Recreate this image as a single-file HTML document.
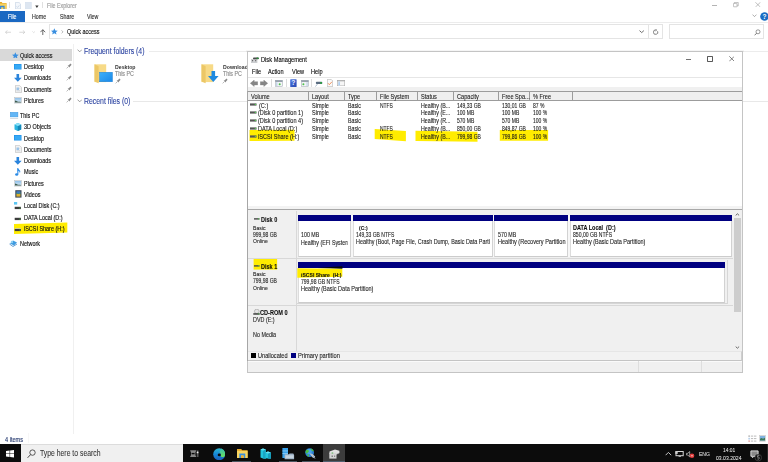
<!DOCTYPE html><html><head><meta charset="utf-8"><style>
*{margin:0;padding:0;box-sizing:border-box}
html,body{width:768px;height:462px;overflow:hidden}
body{position:relative;background:#fff;font-family:"Liberation Sans",sans-serif;color:#000}
.a{position:absolute}
.t{position:absolute;white-space:nowrap;line-height:10px;height:10px;transform-origin:0 0}
</style></head><body><svg class="a" style="left:-2.5px;top:2px;" width="9" height="7" viewBox="0 0 9 7"><path d="M0 0h3.6l0.9 1H8.5v6H0z" fill="#e2a62a"/><rect x="0" y="1.5" width="8.5" height="5.5" fill="#f8d25e"/><path d="M2 7V3.8h4.6V7H5.4V5.3H3.2V7z" fill="#3a8ad8"/></svg>
<div class="a" style="left:9.3px;top:2.3px;width:0.90px;height:5.40px;background:#e0e0e0"></div>
<svg class="a" style="left:15px;top:2px;" width="6" height="7.4" viewBox="0 0 6 7.4"><path d="M0.4 0.4h3.6l1.6 1.6v5H0.4z" fill="#f4f7fb" stroke="#c5d3e4" stroke-width="0.7"/><path d="M1.5 4.4l1 1 1.8-2" fill="none" stroke="#b0c2d8" stroke-width="0.6"/></svg>
<svg class="a" style="left:25.4px;top:2px;" width="6.6" height="7.4" viewBox="0 0 6.6 7.4"><rect x="0.3" y="0.3" width="6" height="6.8" fill="#dde6f1" stroke="#d0dceb" stroke-width="0.5"/></svg>
<svg class="a" style="left:35.4px;top:4.6px;" width="4" height="3.2" viewBox="0 0 4 3.2"><path d="M0.2 0.4h3.4L1.9 2.9z" fill="#333"/></svg>
<div class="a" style="left:42.2px;top:2.3px;width:0.80px;height:5.40px;background:#e0e0e0"></div>
<div class="t" style="left:46.6px;top:1.40px;font-size:6.360px;transform:scaleX(0.8333);color:#9a9a9a;-webkit-text-stroke:0.14px #9a9a9a;">File Explorer</div>
<div class="a" style="left:712.4px;top:4.65px;width:4.90px;height:0.45px;background:#b4b4b4"></div>
<svg class="a" style="left:732.9px;top:2.4px;" width="6" height="5.2" viewBox="0 0 6 5.2"><rect x="0.4" y="1.4" width="3.6" height="3.4" rx="0.4" fill="none" stroke="#999" stroke-width="0.6"/><path d="M1.4 1.4V0.4h3.8v3.5H4" fill="none" stroke="#999" stroke-width="0.6"/></svg>
<svg class="a" style="left:754.7px;top:2.1px;" width="6" height="5.4" viewBox="0 0 6 5.4"><path d="M0.3 0.2l5.2 5M5.5 0.2l-5.2 5" stroke="#999" stroke-width="0.6"/></svg>
<div class="a" style="left:0px;top:10.9px;width:25.00px;height:10.70px;background:#1a68c2"></div>
<div class="t" style="left:8px;top:12.00px;font-size:6.360px;transform:scaleX(0.8333);color:#fff;-webkit-text-stroke:0.14px #fff;">File</div>
<div class="t" style="left:31.9px;top:12.00px;font-size:6.360px;transform:scaleX(0.8333);color:#333;-webkit-text-stroke:0.14px #333;">Home</div>
<div class="t" style="left:59.6px;top:12.00px;font-size:6.360px;transform:scaleX(0.8333);color:#333;-webkit-text-stroke:0.14px #333;">Share</div>
<div class="t" style="left:87px;top:12.00px;font-size:6.360px;transform:scaleX(0.8333);color:#333;-webkit-text-stroke:0.14px #333;">View</div>
<svg class="a" style="left:751.5px;top:14px;" width="5" height="3.5" viewBox="0 0 5 3.5"><path d="M0.5 0.6l2 2 2-2" fill="none" stroke="#777" stroke-width="0.6"/></svg>
<svg class="a" style="left:760.3px;top:11.6px;" width="9" height="9" viewBox="0 0 9 9"><circle cx="4.5" cy="4.5" r="4.3" fill="#1a6cc4"/><text x="4.5" y="6.8" font-size="6.5" font-weight="bold" text-anchor="middle" fill="#fff" font-family="Liberation Sans">?</text></svg>
<div class="a" style="left:0px;top:21.6px;width:768.00px;height:0.70px;background:#ececec"></div>
<svg class="a" style="left:4.7px;top:29.5px;" width="6.5" height="4.5" viewBox="0 0 6.5 4.5"><path d="M0.5 2.25h5.5M2.5 0.3L0.5 2.25l2 1.95" fill="none" stroke="#c0c0c0" stroke-width="0.6"/></svg>
<svg class="a" style="left:18.5px;top:29.5px;" width="6.5" height="4.5" viewBox="0 0 6.5 4.5"><path d="M0.3 2.25h5.5M3.8 0.3l2 1.95-2 1.95" fill="none" stroke="#c0c0c0" stroke-width="0.6"/></svg>
<svg class="a" style="left:31.5px;top:31px;" width="3.5" height="2.5" viewBox="0 0 3.5 2.5"><path d="M0.3 0.3l1.4 1.4 1.4-1.4" fill="none" stroke="#c8c8c8" stroke-width="0.5"/></svg>
<svg class="a" style="left:39.5px;top:28.6px;" width="6" height="6.4" viewBox="0 0 6 6.4"><path d="M2.8 6.2V0.8M0.4 3.2L2.8 0.7 5.2 3.2" fill="none" stroke="#444" stroke-width="0.8"/></svg>
<div class="a" style="left:48.9px;top:24.3px;width:599.70px;height:14.30px;border:0.8px solid #e4e4e4"></div>
<svg class="a" style="left:51px;top:28.1px;" width="7" height="6.5" viewBox="0 0 7 6.5"><path d="M3.3 0.3l1 2.2 2.4.2-1.8 1.6.6 2.3-2.2-1.3-2.1 1.3.6-2.3L0 2.7l2.4-.2z" fill="#3a8fe0"/></svg>
<svg class="a" style="left:60.8px;top:30.3px;" width="3" height="3.5" viewBox="0 0 3 3.5"><path d="M0.6 0.4l1.4 1.4-1.4 1.4" fill="none" stroke="#666" stroke-width="0.5"/></svg>
<div class="t" style="left:67.4px;top:26.80px;font-size:6.540px;transform:scaleX(0.8333);color:#111;-webkit-text-stroke:0.14px #111;">Quick access</div>
<svg class="a" style="left:639px;top:30.3px;" width="5.5" height="3.4" viewBox="0 0 5.5 3.4"><path d="M0.5 0.6l2.2 2 2.2-2" fill="none" stroke="#555" stroke-width="0.85"/></svg>
<div class="a" style="left:648.6px;top:24.3px;width:14.40px;height:14.30px;border:0.8px solid #e4e4e4;border-left:none"></div>
<svg class="a" style="left:653px;top:28.8px;" width="6" height="6" viewBox="0 0 6 6"><path d="M4.6 2.2A2.2 2.2 0 1 1 3 1" fill="none" stroke="#555" stroke-width="0.7"/><path d="M2.5 0.2l1.3 0.8-1.1 1" fill="none" stroke="#555" stroke-width="0.6"/></svg>
<div class="a" style="left:668.5px;top:24.3px;width:95.10px;height:14.40px;border:0.8px solid #e4e4e4"></div>
<svg class="a" style="left:753.5px;top:28.5px;" width="7" height="7" viewBox="0 0 7 7"><circle cx="4" cy="2.8" r="2" fill="none" stroke="#555" stroke-width="0.6"/><path d="M2.6 4.2L0.6 6.3" stroke="#555" stroke-width="0.8"/></svg>
<div class="a" style="left:0px;top:49.3px;width:72.00px;height:11.30px;background:#d9d9d9"></div>
<div class="a" style="left:73.2px;top:44px;width:0.70px;height:390.00px;background:#f0f0f0"></div>
<svg class="a" style="left:13px;top:221px" width="56" height="14" viewBox="0 0 56 14"><path d="M1 3 L54.3 1.4 L54.3 11.5 L1 13.1 Z" fill="#ffec00"/></svg>
<svg class="a" style="left:11.8px;top:51.7px;" width="7" height="6.5" viewBox="0 0 7 6.5"><path d="M3.3 0.3l1 2.2 2.4.2-1.8 1.6.6 2.3-2.2-1.3-2.1 1.3.6-2.3L0 2.7l2.4-.2z" fill="#3a8fe0"/></svg>
<div class="t" style="left:20px;top:50.50px;font-size:6.540px;transform:scaleX(0.8333);color:#111;-webkit-text-stroke:0.14px #111;">Quick access</div>
<svg class="a" style="left:14px;top:63.60000000000001px;" width="8" height="6" viewBox="0 0 8 6"><rect x="0" y="0" width="7.5" height="5.5" fill="#1e90e8"/><rect x="0.6" y="0.6" width="6.3" height="4.3" fill="#36a9f5"/></svg>
<div class="t" style="left:23.8px;top:61.90px;font-size:6.540px;transform:scaleX(0.8333);color:#111;-webkit-text-stroke:0.14px #111;">Desktop</div>
<svg class="a" style="left:66px;top:63.400000000000006px;" width="6" height="6" viewBox="0 0 6 6"><path d="M0.6 5.4L2.4 3.6" stroke="#808080" stroke-width="0.55"/><path d="M1.6 2.6l2 2 0.4-1.2 1.6-1.6-1.2-1.2-1.6 1.6z" fill="#8a8a8a"/></svg>
<svg class="a" style="left:14px;top:73.8px;" width="8" height="8" viewBox="0 0 8 8"><path d="M2.5 0h2.6v3.8h2.6L3.8 7.8 0 3.8h2.5z" fill="#2a84dc"/></svg>
<div class="t" style="left:23.8px;top:73.10px;font-size:6.540px;transform:scaleX(0.8333);color:#111;-webkit-text-stroke:0.14px #111;">Downloads</div>
<svg class="a" style="left:66px;top:74.6px;" width="6" height="6" viewBox="0 0 6 6"><path d="M0.6 5.4L2.4 3.6" stroke="#808080" stroke-width="0.55"/><path d="M1.6 2.6l2 2 0.4-1.2 1.6-1.6-1.2-1.2-1.6 1.6z" fill="#8a8a8a"/></svg>
<svg class="a" style="left:14.5px;top:85.0px;" width="7" height="8" viewBox="0 0 7 8"><path d="M0.5 0.4h4l2 2v5.2h-6z" fill="#f2f2f2" stroke="#b0b0b0" stroke-width="0.5"/><path d="M1.5 2.5h2.5v2.5H1.5z" fill="#9cc4e8"/><path d="M1.5 5.8h3.6M4.4 3.4h0.8" stroke="#a8b8c8" stroke-width="0.5"/></svg>
<div class="t" style="left:23.8px;top:84.50px;font-size:6.540px;transform:scaleX(0.8333);color:#111;-webkit-text-stroke:0.14px #111;">Documents</div>
<svg class="a" style="left:66px;top:86.0px;" width="6" height="6" viewBox="0 0 6 6"><path d="M0.6 5.4L2.4 3.6" stroke="#808080" stroke-width="0.55"/><path d="M1.6 2.6l2 2 0.4-1.2 1.6-1.6-1.2-1.2-1.6 1.6z" fill="#8a8a8a"/></svg>
<svg class="a" style="left:14px;top:97.1px;" width="8" height="6.5" viewBox="0 0 8 6.5"><rect x="0.3" y="0.3" width="7.4" height="5.8" fill="#e6e9ec" stroke="#b8bec4" stroke-width="0.5"/><defs><linearGradient id="sk" x1="0" y1="0" x2="0" y2="1"><stop offset="0" stop-color="#8ec0ea"/><stop offset="1" stop-color="#d8e8f4"/></linearGradient></defs><rect x="1" y="1" width="6" height="4.4" fill="url(#sk)"/><path d="M1 5.4V3.6c1 0.2 2 0.6 3 1.2 1-0.2 2-0.1 3 0.2v0.4z" fill="#3c5a4c"/></svg>
<div class="t" style="left:23.8px;top:95.80px;font-size:6.540px;transform:scaleX(0.8333);color:#111;-webkit-text-stroke:0.14px #111;">Pictures</div>
<svg class="a" style="left:66px;top:97.3px;" width="6" height="6" viewBox="0 0 6 6"><path d="M0.6 5.4L2.4 3.6" stroke="#808080" stroke-width="0.55"/><path d="M1.6 2.6l2 2 0.4-1.2 1.6-1.6-1.2-1.2-1.6 1.6z" fill="#8a8a8a"/></svg>
<svg class="a" style="left:9.9px;top:111.9px;" width="9" height="8" viewBox="0 0 9 8"><rect x="0.3" y="0.3" width="7.6" height="4.6" fill="#62b6f6" stroke="#3e98e0" stroke-width="0.5"/><rect x="0.1" y="6.1" width="8" height="0.9" fill="#d2d8de"/></svg>
<div class="t" style="left:20px;top:110.90px;font-size:6.540px;transform:scaleX(0.8333);color:#111;-webkit-text-stroke:0.14px #111;">This PC</div>
<svg class="a" style="left:14px;top:122.8px;" width="8" height="8" viewBox="0 0 8 8"><path d="M0.5 1.5L3.8 0l3.4 1.5v5L3.8 8 0.5 6.5z" fill="#2bb5e0"/><path d="M3.8 3v5L7.2 6.5v-5z" fill="#1687b8"/><path d="M0.5 1.5L3.8 3l3.4-1.5L3.8 0z" fill="#8be0f8"/></svg>
<div class="t" style="left:23.8px;top:122.30px;font-size:6.540px;transform:scaleX(0.8333);color:#111;-webkit-text-stroke:0.14px #111;">3D Objects</div>
<svg class="a" style="left:14px;top:135.29999999999998px;" width="8" height="6" viewBox="0 0 8 6"><rect x="0" y="0" width="7.5" height="5.5" fill="#1e90e8"/><rect x="0.6" y="0.6" width="6.3" height="4.3" fill="#36a9f5"/></svg>
<div class="t" style="left:23.8px;top:133.60px;font-size:6.540px;transform:scaleX(0.8333);color:#111;-webkit-text-stroke:0.14px #111;">Desktop</div>
<svg class="a" style="left:14.5px;top:145.2px;" width="7" height="8" viewBox="0 0 7 8"><path d="M0.5 0.4h4l2 2v5.2h-6z" fill="#f2f2f2" stroke="#b0b0b0" stroke-width="0.5"/><path d="M1.5 2.5h2.5v2.5H1.5z" fill="#9cc4e8"/><path d="M1.5 5.8h3.6M4.4 3.4h0.8" stroke="#a8b8c8" stroke-width="0.5"/></svg>
<div class="t" style="left:23.8px;top:144.70px;font-size:6.540px;transform:scaleX(0.8333);color:#111;-webkit-text-stroke:0.14px #111;">Documents</div>
<svg class="a" style="left:14px;top:156.6px;" width="8" height="8" viewBox="0 0 8 8"><path d="M2.5 0h2.6v3.8h2.6L3.8 7.8 0 3.8h2.5z" fill="#2a84dc"/></svg>
<div class="t" style="left:23.8px;top:155.90px;font-size:6.540px;transform:scaleX(0.8333);color:#111;-webkit-text-stroke:0.14px #111;">Downloads</div>
<svg class="a" style="left:15px;top:167.8px;" width="6" height="8.5" viewBox="0 0 6 8.5"><path d="M2.3 0.2h0.9c0.2 1 1.4 1.6 1.9 2.6 0.4 0.9 0.1 1.9-0.4 2.4 0.2-1.1-0.3-2-1.5-2.4v3.6" fill="#2a8ae6"/><path d="M2.75 0.3v5.9" stroke="#2a8ae6" stroke-width="0.9"/><ellipse cx="1.7" cy="6.6" rx="1.6" ry="1.25" fill="#2a8ae6"/></svg>
<div class="t" style="left:23.8px;top:167.30px;font-size:6.540px;transform:scaleX(0.8333);color:#111;-webkit-text-stroke:0.14px #111;">Music</div>
<svg class="a" style="left:14px;top:180.0px;" width="8" height="6.5" viewBox="0 0 8 6.5"><rect x="0.3" y="0.3" width="7.4" height="5.8" fill="#e6e9ec" stroke="#b8bec4" stroke-width="0.5"/><defs><linearGradient id="sk" x1="0" y1="0" x2="0" y2="1"><stop offset="0" stop-color="#8ec0ea"/><stop offset="1" stop-color="#d8e8f4"/></linearGradient></defs><rect x="1" y="1" width="6" height="4.4" fill="url(#sk)"/><path d="M1 5.4V3.6c1 0.2 2 0.6 3 1.2 1-0.2 2-0.1 3 0.2v0.4z" fill="#3c5a4c"/></svg>
<div class="t" style="left:23.8px;top:178.70px;font-size:6.540px;transform:scaleX(0.8333);color:#111;-webkit-text-stroke:0.14px #111;">Pictures</div>
<svg class="a" style="left:14.5px;top:190.3px;" width="7" height="8" viewBox="0 0 7 8"><rect x="0.3" y="0.2" width="6.2" height="7.4" fill="#3a4656"/><rect x="1.4" y="1.2" width="4" height="2.6" fill="#3d7bc4"/><rect x="1.4" y="4" width="4" height="2.6" fill="#d8b030"/><path d="M1.4 2.4l2 1.4 2-1.6v1.6h-4z" fill="#58a050"/></svg>
<div class="t" style="left:23.8px;top:189.80px;font-size:6.540px;transform:scaleX(0.8333);color:#111;-webkit-text-stroke:0.14px #111;">Videos</div>
<svg class="a" style="left:14px;top:201.9px;" width="9" height="8" viewBox="0 0 9 8"><rect x="-0.4" y="-1" width="3.6" height="3.6" fill="#5cc6f2"/><rect x="0.7" y="4.3" width="6.2" height="0.9" fill="#c4c4c4"/><rect x="0.7" y="5" width="6.2" height="2.1" fill="#3c3c3c"/><rect x="5.3" y="5.6" width="1.1" height="0.9" fill="#3faa3f"/></svg>
<div class="t" style="left:23.8px;top:201.40px;font-size:6.540px;transform:scaleX(0.8333);color:#111;-webkit-text-stroke:0.14px #111;">Local Disk (C:)</div>
<svg class="a" style="left:14px;top:213.2px;" width="9" height="8" viewBox="0 0 9 8"><rect x="0.7" y="4.3" width="6.2" height="0.9" fill="#c4c4c4"/><rect x="0.7" y="5" width="6.2" height="2.1" fill="#3c3c3c"/><rect x="5.3" y="5.6" width="1.1" height="0.9" fill="#3faa3f"/></svg>
<div class="t" style="left:23.8px;top:212.70px;font-size:6.540px;transform:scaleX(0.8333);color:#111;-webkit-text-stroke:0.14px #111;">DATA Local (D:)</div>
<svg class="a" style="left:14px;top:224.4px;" width="9" height="8" viewBox="0 0 9 8"><rect x="0.7" y="4.3" width="6.2" height="0.9" fill="#c4c4c4"/><rect x="0.7" y="5" width="6.2" height="2.1" fill="#3c3c3c"/><rect x="5.3" y="5.6" width="1.1" height="0.9" fill="#3faa3f"/></svg>
<div class="t" style="left:23.8px;top:223.90px;font-size:6.540px;transform:scaleX(0.8333);color:#111;-webkit-text-stroke:0.14px #111;">iSCSI Share (H:)</div>
<svg class="a" style="left:9.3px;top:239.0px;" width="9" height="8" viewBox="0 0 9 8"><path d="M1 4.5l3-3 4 2-3 3z" fill="#3f9be0"/><path d="M0.5 5l3.5 2.5 4-2.5" fill="none" stroke="#2a78c0" stroke-width="0.7"/><circle cx="3" cy="3" r="1.2" fill="#8ccff5"/></svg>
<div class="t" style="left:20px;top:238.50px;font-size:6.540px;transform:scaleX(0.8333);color:#111;-webkit-text-stroke:0.14px #111;">Network</div>
<svg class="a" style="left:76.8px;top:49.4px;" width="5.5" height="3.5" viewBox="0 0 5.5 3.5"><path d="M0.5 0.6l2.2 2.2 2.2-2.2" fill="none" stroke="#858585" stroke-width="0.8"/></svg>
<div class="t" style="left:84.1px;top:46.90px;font-size:8.280px;transform:scaleX(0.8333);color:#2a42a0;-webkit-text-stroke:0.1px #2a42a0;">Frequent folders (4)</div>
<div class="a" style="left:148.5px;top:50.9px;width:619.50px;height:0.70px;background:#ececec"></div>
<svg class="a" style="left:93.6px;top:64.1px;" width="20" height="20" viewBox="0 0 20 20"><path d="M0.5 0.3h11.7v17.8H0.5z" fill="#f7da87"/><path d="M0.5 0.3L4.6 2.2V19.2L0.5 17.6z" fill="#ecc766"/><defs><linearGradient id="dg" x1="0" y1="0" x2="1" y2="1"><stop offset="0" stop-color="#3cb0fa"/><stop offset="1" stop-color="#1a88e8"/></linearGradient></defs><rect x="5.5" y="8.2" width="13" height="9.6" fill="url(#dg)" stroke="#1a7ad0" stroke-width="0.4"/></svg>
<div class="t" style="left:114.9px;top:61.50px;font-size:6.240px;transform:scaleX(0.8333);color:#333;font-weight:bold;">Desktop</div>
<div class="t" style="left:114.9px;top:68.90px;font-size:6.360px;transform:scaleX(0.8333);color:#888;-webkit-text-stroke:0.14px #888;">This PC</div>
<svg class="a" style="left:114.5px;top:77.5px;" width="6" height="6" viewBox="0 0 6 6"><path d="M0.6 5.4L2.4 3.6" stroke="#808080" stroke-width="0.55"/><path d="M1.6 2.6l2 2 0.4-1.2 1.6-1.6-1.2-1.2-1.6 1.6z" fill="#8a8a8a"/></svg>
<svg class="a" style="left:201px;top:64px;" width="20" height="20" viewBox="0 0 20 20"><path d="M0.5 0.3h11.7v17.8H0.5z" fill="#f7da87"/><path d="M0.5 0.3L4.6 2.2V19.2L0.5 17.6z" fill="#ecc766"/><path d="M10.5 7h3.6v5h3.5l-5.3 6-5.3-6h3.5z" fill="#1f8ae0"/></svg>
<div class="t" style="left:222.6px;top:61.50px;font-size:6.240px;transform:scaleX(0.8333);color:#333;font-weight:bold;">Downloads</div>
<div class="t" style="left:222.6px;top:68.90px;font-size:6.360px;transform:scaleX(0.8333);color:#888;-webkit-text-stroke:0.14px #888;">This PC</div>
<svg class="a" style="left:222.2px;top:77.5px;" width="6" height="6" viewBox="0 0 6 6"><path d="M0.6 5.4L2.4 3.6" stroke="#808080" stroke-width="0.55"/><path d="M1.6 2.6l2 2 0.4-1.2 1.6-1.6-1.2-1.2-1.6 1.6z" fill="#8a8a8a"/></svg>
<svg class="a" style="left:76.8px;top:99.4px;" width="5.5" height="3.5" viewBox="0 0 5.5 3.5"><path d="M0.5 0.6l2.2 2.2 2.2-2.2" fill="none" stroke="#858585" stroke-width="0.8"/></svg>
<div class="t" style="left:84.1px;top:96.90px;font-size:8.280px;transform:scaleX(0.8333);color:#2a42a0;-webkit-text-stroke:0.1px #2a42a0;">Recent files (0)</div>
<div class="a" style="left:133.4px;top:100.6px;width:634.60px;height:0.70px;background:#e8e8e8"></div>
<div class="t" style="left:5.2px;top:434.60px;font-size:6.720px;transform:scaleX(0.8333);color:#2b3f73;-webkit-text-stroke:0.14px #2b3f73;">4 items</div>
<div class="a" style="left:28px;top:433px;width:0.60px;height:10.00px;background:#f7f7f7"></div>
<svg class="a" style="left:747.5px;top:434.5px;" width="9" height="7.5" viewBox="0 0 9 7.5"><rect x="0.3" y="0.3" width="1.8" height="1.7" fill="#c4c4c4"/><rect x="0.3" y="2.8" width="1.8" height="1.7" fill="#b8d0ea"/><rect x="0.3" y="5.3" width="1.8" height="1.7" fill="#eab8b8"/><path d="M3 1.1h2M5.8 1.1h2.6M3 3.6h2M5.8 3.6h2.6M3 6.1h2M5.8 6.1h2.6" stroke="#8a8a8a" stroke-width="0.6"/></svg>
<svg class="a" style="left:759px;top:435.2px;" width="7" height="6.5" viewBox="0 0 7 6.5"><rect x="0.3" y="0.3" width="6.4" height="5.9" fill="#e8e8e8" stroke="#c0c0c0" stroke-width="0.5"/><rect x="1" y="1" width="5" height="4.5" fill="#7fb2e0"/><path d="M1 5.5V3.8l1.6-0.8 1.4 0.8 2-1v2.7z" fill="#3e7a5a"/></svg>
<div class="a" style="left:0px;top:444px;width:768.00px;height:18.00px;background:#0c0c0c"></div>
<svg class="a" style="left:5.8px;top:450.1px;" width="8.5" height="7.6" viewBox="0 0 8.5 7.6"><path d="M0 1.1L3.6 0.6V3.6H0zM4.1 0.5L8.3 0v3.6H4.1zM0 4.1h3.6v3L0 6.6zM4.1 4.1h4.2v3.5L4.1 7.1z" fill="#fff"/></svg>
<div class="a" style="left:21.3px;top:444px;width:162.00px;height:18.00px;background:#f0f0f0;border-top:0.6px solid #dcdcdc"></div>
<svg class="a" style="left:26.5px;top:449px;" width="9" height="10" viewBox="0 0 9 10"><circle cx="5.5" cy="3.6" r="2.7" fill="none" stroke="#333" stroke-width="0.8"/><path d="M3.6 5.6L0.6 8.8" stroke="#333" stroke-width="0.9"/></svg>
<div class="t" style="left:40.4px;top:449.00px;font-size:8.232px;transform:scaleX(0.8333);color:#333;-webkit-text-stroke:0.06px #333;">Type here to search</div>
<svg class="a" style="left:190px;top:449.8px;" width="9.5" height="7.6" viewBox="0 0 9.5 7.6"><path d="M0.2 0.2h6v0.8c-0.6 0.4-0.8 1.2-0.8 2.7s0.2 2.3 0.8 2.7v0.8h-6v-0.8c0.6-0.4 0.8-1.2 0.8-2.7S0.8 1.4 0.2 1z" fill="#888"/><rect x="1.6" y="2.9" width="3" height="1.4" fill="#0c0c0c"/><rect x="6.8" y="0.4" width="1.7" height="6.6" fill="#5a5a5a"/><circle cx="7.6" cy="2.4" r="0.9" fill="#eee"/></svg>
<svg class="a" style="left:212.6px;top:447.6px;" width="12.5" height="12.5" viewBox="0 0 12.5 12.5"><defs><linearGradient id="eg" x1="0" y1="0" x2="0" y2="1"><stop offset="0" stop-color="#30b8d0"/><stop offset="0.5" stop-color="#1688d8"/><stop offset="1" stop-color="#1a5cb8"/></linearGradient><linearGradient id="eg2" x1="0" y1="0" x2="0" y2="1"><stop offset="0" stop-color="#38c0b0"/><stop offset="1" stop-color="#6ae05a"/></linearGradient></defs><circle cx="6.2" cy="6.2" r="6" fill="url(#eg)"/><path d="M8.2 0.6a6 6 0 0 1 3.9 6.4c-0.3 1.6-1.5 2.3-2.8 2.1-1.2-0.2-1.7-1-1.6-1.8 0.1-0.9 0.2-2.4-1.2-3.1z" fill="url(#eg2)"/><ellipse cx="6.3" cy="6.9" rx="1.6" ry="1.4" fill="#0c0c0c"/></svg>
<svg class="a" style="left:236.5px;top:448.8px;" width="11" height="9.5" viewBox="0 0 11 9.5"><path d="M0 0h4.2l1 1.3H10.6v8.2H0z" fill="#e5a82a"/><rect x="0" y="1.8" width="10.6" height="7.7" fill="#f8d460"/><path d="M2.3 9.5V4.4h6v5.1H6.6V6.4H4v3.1z" fill="#3d8fdc"/><rect x="4" y="6.4" width="2.6" height="3.1" fill="#f0b030"/></svg>
<div class="a" style="left:232px;top:461px;width:19.00px;height:1.00px;background:#4a5560"></div>
<svg class="a" style="left:259.5px;top:448px;" width="11.5" height="11" viewBox="0 0 11.5 11"><path d="M0.5 1.6L3 0.4 5.8 1.4v9.4L3 10.6 0.5 9.6z" fill="#22c4dc"/><path d="M3 2.4v8.2l2.8 0.2V1.4z" fill="#1aa6c4"/><path d="M0.5 1.6L3 0.4 5.8 1.4 3 2.4z" fill="#6ae4f4"/><path d="M5.5 4.6L8 3.6l2.8 1v6.2L8 10.6 5.5 10.2z" fill="#22c4dc"/><path d="M8 5.4v5.2l2.8 0.2V4.6z" fill="#169cbc"/><path d="M5.5 4.6L8 3.6l2.8 1L8 5.4z" fill="#6ae4f4"/></svg>
<svg class="a" style="left:281.8px;top:448px;" width="13" height="11.5" viewBox="0 0 13 11.5"><rect x="0.4" y="0" width="5.6" height="10" fill="#3aa2ec"/><rect x="0.4" y="2.6" width="5.6" height="0.7" fill="#9cd4fa"/><rect x="0.4" y="5.2" width="5.6" height="0.7" fill="#9cd4fa"/><path d="M2.6 6.2h4l1.2-0.8h3.5l0.8 1.6v4.2H2.6z" fill="#9fb2c6"/><rect x="3.4" y="7.3" width="8.2" height="2.8" fill="#c6d3df"/></svg>
<div class="a" style="left:279px;top:461px;width:18.30px;height:1.00px;background:#4a5560"></div>
<svg class="a" style="left:305.3px;top:447.6px;" width="11.5" height="11.5" viewBox="0 0 11.5 11.5"><circle cx="4.6" cy="4.6" r="4.4" fill="#2b7fd6"/><circle cx="4.2" cy="3.6" r="2.6" fill="#58b0ee" opacity="0.7"/><path d="M0.8 2.6c1.2-1.2 2.6-0.8 3 0.2 0.4 1-0.6 1.6-1.6 2.4S0.2 4.8 0.8 2.6zM5.4 0.5c1.6 0.3 3 1.4 3.5 2.8-1 0.2-2-0.2-2.6-1.1zM2.4 6.4c0.8-0.3 1.6 0.3 1.6 1.2l-0.6 1.2c-0.8-0.3-1.4-1-1-2.4z" fill="#4cc040"/><path d="M4.6 5.8c1.2-0.4 2.6-0.2 3.4 0.6l2.2 2.2-0.8 1.6-1.6-0.4z" fill="#b8c4d0"/><path d="M8.4 8.8l2 1.8" stroke="#7a8a9a" stroke-width="1"/></svg>
<div class="a" style="left:301.9px;top:461px;width:18.10px;height:1.00px;background:#4a5560"></div>
<div class="a" style="left:322.8px;top:444px;width:22.50px;height:18.00px;background:#3c3c3c"></div>
<svg class="a" style="left:328.8px;top:449.2px;" width="11" height="10" viewBox="0 0 11 10"><path d="M0.5 2.6L6 0.4l4.4 1.4v2.2L5 6.2 0.5 4.4z" fill="#e2e2e2"/><path d="M0.5 4.4L5 6.2l5.4-2.2" fill="none" stroke="#bdbdbd" stroke-width="0.5"/><path d="M0.3 3.8h7.2v5.8H0.3z" fill="#d4d4d4"/><rect x="2.6" y="3.6" width="1.6" height="0.8" fill="#3a3"/><rect x="2.6" y="6.6" width="1.2" height="1.2" fill="#555"/><rect x="5" y="6.6" width="1.2" height="1.2" fill="#777"/></svg>
<div class="a" style="left:322.8px;top:461px;width:22.50px;height:1.00px;background:#506070"></div>
<svg class="a" style="left:664.8px;top:451.3px;" width="7" height="5" viewBox="0 0 7 5"><path d="M0.6 4.2l2.8-2.8 2.8 2.8" fill="none" stroke="#d8d8d8" stroke-width="0.9"/></svg>
<svg class="a" style="left:675.4px;top:450.8px;" width="9" height="6" viewBox="0 0 9 6"><rect x="1" y="0.5" width="7.2" height="4.2" fill="none" stroke="#d8d8d8" stroke-width="1"/><rect x="0.3" y="0.3" width="2.4" height="2.6" fill="#d0d0d0"/><path d="M3.6 5.4h2.4" stroke="#d8d8d8" stroke-width="0.8"/></svg>
<svg class="a" style="left:686.4px;top:450.8px;" width="9" height="7.5" viewBox="0 0 9 7.5"><path d="M0.6 2.3h1.2l1.9-1.7v5.2L1.8 4.1H0.6z" fill="none" stroke="#d8d8d8" stroke-width="0.7"/><circle cx="6" cy="4.7" r="2.3" fill="#e23a3a"/><path d="M5.2 3.9l1.6 1.6M6.8 3.9L5.2 5.5" stroke="#fff" stroke-width="0.5"/></svg>
<div class="t" style="left:699.1px;top:449.10px;font-size:6.036px;transform:scaleX(0.8333);color:#eee;-webkit-text-stroke:0.03px #eee;">ENG</div>
<div class="t" style="left:722.6px;top:445.10px;font-size:5.880px;transform:scaleX(0.8333);color:#eee;-webkit-text-stroke:0.03px #eee;">14:01</div>
<div class="t" style="left:716px;top:453.40px;font-size:6.132px;transform:scaleX(0.8333);color:#eee;-webkit-text-stroke:0.03px #eee;">03.03.2024</div>
<svg class="a" style="left:749.5px;top:449.5px;" width="12.5" height="12" viewBox="0 0 12.5 12"><path d="M0.9 0.9h7.2v5.4H4L2.4 7.6V6.3H0.9z" fill="#8a8a8a" stroke="#e6e6e6" stroke-width="0.9"/><circle cx="8.3" cy="7.6" r="3.3" fill="#0c0c0c" stroke="#555" stroke-width="0.6"/><path d="M9.4 5.6H7.6l-0.3 1.6c0.4-0.3 1-0.4 1.5-0.1 0.6 0.3 0.7 1.2 0.3 1.7-0.4 0.5-1.2 0.5-1.7 0.1" fill="none" stroke="#dcdcdc" stroke-width="0.55"/></svg>
<div class="a" style="left:766.6px;top:444px;width:1.40px;height:18.00px;background:#2a2a2a"></div>
<div class="a" style="left:246.0px;top:49.8px;width:498.00px;height:2.50px;background:rgba(0,0,0,0.04);filter:blur(0.6px)"></div>
<div class="a" style="left:247.0px;top:51.3px;width:496.00px;height:321.60px;background:#fff;border:1px solid #c4c4c4;border-top-width:1.3px"></div>
<div id="dm">
<svg class="a" style="left:250.8px;top:56.8px;" width="8.2" height="6.4" viewBox="0 0 8.2 6.4"><rect x="0.2" y="2.2" width="5.9" height="3.8" fill="#cfd1d4" stroke="#b8babd" stroke-width="0.3"/><circle cx="1.6" cy="3.7" r="0.6" fill="#555"/><circle cx="4.7" cy="3.7" r="0.6" fill="#555"/><rect x="2" y="0.4" width="5.9" height="1.9" rx="0.8" fill="#4a4a4a"/><rect x="5.4" y="0.6" width="2.3" height="1.5" rx="0.7" fill="#2e8b3e"/></svg>
<div class="t" style="left:261px;top:54.90px;font-size:6.840px;transform:scaleX(0.8333);color:#000;-webkit-text-stroke:0.1px #000;">Disk Management</div>
<div class="a" style="left:686.3px;top:58.85px;width:5.00px;height:0.45px;background:#707070"></div>
<div class="a" style="left:707.2px;top:56.3px;width:5.60px;height:5.50px;border:0.6px solid #5a5a5a;border-radius:0.7px"></div>
<svg class="a" style="left:728.9px;top:56.3px;" width="5.6" height="5.6" viewBox="0 0 5.6 5.6"><path d="M0.3 0.3l5 5M5.3 0.3l-5 5" stroke="#444" stroke-width="0.65"/></svg>
<div class="t" style="left:252px;top:67.00px;font-size:6.720px;transform:scaleX(0.8333);color:#000;-webkit-text-stroke:0.1px #000;">File</div>
<div class="t" style="left:268.1px;top:67.00px;font-size:6.720px;transform:scaleX(0.8333);color:#000;-webkit-text-stroke:0.1px #000;">Action</div>
<div class="t" style="left:291.9px;top:67.00px;font-size:6.720px;transform:scaleX(0.8333);color:#000;-webkit-text-stroke:0.1px #000;">View</div>
<div class="t" style="left:311.4px;top:67.00px;font-size:6.720px;transform:scaleX(0.8333);color:#000;-webkit-text-stroke:0.1px #000;">Help</div>
<div class="a" style="left:247.8px;top:76.6px;width:494.40px;height:0.80px;background:#e6e6e6"></div>
<svg class="a" style="left:249.6px;top:79.8px;" width="8" height="7" viewBox="0 0 8 7"><path d="M0.3 3.3L4.2 0.1v1.6h3.5v3.2H4.2v1.6z" fill="#858585" stroke="#858585" stroke-width="0.4" stroke-linejoin="round"/></svg>
<svg class="a" style="left:260.2px;top:79.8px;" width="8" height="7" viewBox="0 0 8 7"><path d="M7.7 3.3L3.8 0.1v1.6H0.3v3.2h3.5v1.6z" fill="#858585" stroke="#858585" stroke-width="0.4" stroke-linejoin="round"/></svg>
<div class="a" style="left:271.2px;top:79.2px;width:0.70px;height:8.00px;background:#dcdcdc"></div>
<svg class="a" style="left:275.1px;top:80.4px;" width="8" height="7" viewBox="0 0 8 7"><rect x="0.3" y="0.3" width="7.2" height="6.1" fill="#f2f4f6" stroke="#9aa4ae" stroke-width="0.5"/><rect x="0.3" y="0.3" width="7.2" height="1.6" fill="#8e9aa6"/><rect x="1" y="2.2" width="1.4" height="3.8" fill="#c4d6e8"/><circle cx="4.7" cy="4.3" r="1" fill="#4cc04a"/></svg>
<div class="a" style="left:285.5px;top:79.2px;width:0.70px;height:8.00px;background:#dcdcdc"></div>
<svg class="a" style="left:290px;top:78.8px;" width="7" height="8.3" viewBox="0 0 7 8.3"><defs><linearGradient id="hb" x1="0" y1="0" x2="1" y2="1"><stop offset="0" stop-color="#4a74e0"/><stop offset="1" stop-color="#2848b0"/></linearGradient></defs><rect x="0.2" y="0.2" width="6.4" height="7.9" rx="0.6" fill="url(#hb)"/><text x="3.4" y="6.5" font-size="6.8" font-weight="bold" text-anchor="middle" fill="#e8eeff" font-family="Liberation Sans">?</text></svg>
<svg class="a" style="left:300.9px;top:80.4px;" width="8" height="7" viewBox="0 0 8 7"><rect x="0.3" y="0.3" width="7.2" height="6.1" fill="#f2f4f6" stroke="#9aa4ae" stroke-width="0.5"/><rect x="0.3" y="0.3" width="7.2" height="1.6" fill="#8e9aa6"/><rect x="5.4" y="2.2" width="1.4" height="3.8" fill="#c4d6e8"/><circle cx="2.4" cy="4.3" r="1" fill="#4cc04a"/></svg>
<div class="a" style="left:310.5px;top:79.2px;width:0.70px;height:8.00px;background:#dcdcdc"></div>
<svg class="a" style="left:315px;top:81px;" width="8" height="6" viewBox="0 0 8 6"><rect x="0.9" y="0.7" width="6.4" height="2.4" rx="0.8" fill="#5a6c80"/><rect x="5.2" y="1" width="1.8" height="1.8" fill="#2aa040"/><path d="M2.5 3L0.4 5.6" stroke="#8aa0b8" stroke-width="0.7"/></svg>
<svg class="a" style="left:327px;top:79px;" width="6" height="8" viewBox="0 0 6 8"><path d="M0.3 0.3h3.8l1.6 1.6v5.8H0.3z" fill="#fafafa" stroke="#9a9a9a" stroke-width="0.5"/><path d="M1 4.2l1.3 1.5 2.6-2.9" fill="none" stroke="#f07838" stroke-width="0.8"/></svg>
<svg class="a" style="left:337px;top:79.8px;" width="8" height="6.2" viewBox="0 0 8 6.2"><rect x="0.3" y="0.3" width="7.5" height="5.6" fill="#f6f6f6" stroke="#9a9a9a" stroke-width="0.5"/><rect x="0.3" y="0.3" width="7.5" height="1" fill="#a8a8a8"/><rect x="1.3" y="1.5" width="1.6" height="4.2" fill="#cfe2f6"/><path d="M2.1 1.8v3.8" stroke="#3a88d8" stroke-width="0.5" stroke-dasharray="0.8 0.4"/></svg>
<div class="a" style="left:247.8px;top:87.3px;width:494.40px;height:3.90px;background:#f0f0f0"></div>
<div class="a" style="left:247.8px;top:91.2px;width:494.40px;height:9.40px;background:#efefef;border-top:0.8px solid #9c9c9c;border-bottom:0.8px solid #9c9c9c"></div>
<div class="a" style="left:307.90000000000003px;top:91.6px;width:0.80px;height:8.60px;background:#9c9c9c"></div>
<div class="a" style="left:343.90000000000003px;top:91.6px;width:0.80px;height:8.60px;background:#9c9c9c"></div>
<div class="a" style="left:376.1px;top:91.6px;width:0.80px;height:8.60px;background:#9c9c9c"></div>
<div class="a" style="left:417.0px;top:91.6px;width:0.80px;height:8.60px;background:#9c9c9c"></div>
<div class="a" style="left:452.90000000000003px;top:91.6px;width:0.80px;height:8.60px;background:#9c9c9c"></div>
<div class="a" style="left:498.20000000000005px;top:91.6px;width:0.80px;height:8.60px;background:#9c9c9c"></div>
<div class="a" style="left:529.1px;top:91.6px;width:0.80px;height:8.60px;background:#9c9c9c"></div>
<div class="a" style="left:572.0px;top:91.6px;width:0.80px;height:8.60px;background:#9c9c9c"></div>
<div class="t" style="left:251px;top:91.90px;font-size:6.720px;transform:scaleX(0.8333);color:#222;-webkit-text-stroke:0.1px #222;">Volume</div>
<div class="t" style="left:311.8px;top:91.90px;font-size:6.720px;transform:scaleX(0.8333);color:#222;-webkit-text-stroke:0.1px #222;">Layout</div>
<div class="t" style="left:347.9px;top:91.90px;font-size:6.720px;transform:scaleX(0.8333);color:#222;-webkit-text-stroke:0.1px #222;">Type</div>
<div class="t" style="left:379.8px;top:91.90px;font-size:6.720px;transform:scaleX(0.8333);color:#222;-webkit-text-stroke:0.1px #222;">File System</div>
<div class="t" style="left:420.5px;top:91.90px;font-size:6.720px;transform:scaleX(0.8333);color:#222;-webkit-text-stroke:0.1px #222;">Status</div>
<div class="t" style="left:457.2px;top:91.90px;font-size:6.720px;transform:scaleX(0.8333);color:#222;-webkit-text-stroke:0.1px #222;">Capacity</div>
<div class="t" style="left:502.1px;top:91.90px;font-size:6.720px;transform:scaleX(0.8333);color:#222;-webkit-text-stroke:0.1px #222;">Free Spa...</div>
<div class="t" style="left:532.8px;top:91.90px;font-size:6.720px;transform:scaleX(0.8333);color:#222;-webkit-text-stroke:0.1px #222;">% Free</div>
<svg class="a" style="left:249px;top:128px" width="300" height="14" viewBox="0 0 300 14"><path d="M0.5 2 L45.5 1.8 L45.5 12.8 L0.5 12.9 Z" fill="#ffec00"/><path d="M125.7 0.9 L156.9 3 L156.9 13.2 L125.7 11.1 Z" fill="#ffec00"/><path d="M166.5 2.8 L228.5 3.7 L228.5 13.8 L166.5 12.9 Z" fill="#ffec00"/><path d="M250.8 2.1 L299.1 1.9 L299.1 12.8 L250.8 12.8 Z" fill="#ffec00"/></svg>
<svg class="a" style="left:249.6px;top:103.4px;" width="7" height="3" viewBox="0 0 7 3"><rect x="0" y="0.4" width="6.5" height="2.2" fill="#555"/><rect x="4.8" y="0.9" width="1.3" height="1.1" fill="#5c5"/></svg>
<div class="t" style="left:258.8px;top:100.50px;font-size:6.660px;transform:scaleX(0.8333);color:#1a1a1a;-webkit-text-stroke:0.1px #1a1a1a;">(C:)</div>
<div class="t" style="left:311.8px;top:100.50px;font-size:6.660px;transform:scaleX(0.8333);color:#1a1a1a;-webkit-text-stroke:0.1px #1a1a1a;">Simple</div>
<div class="t" style="left:347.9px;top:100.50px;font-size:6.312px;transform:scaleX(0.8333);color:#1a1a1a;-webkit-text-stroke:0.1px #1a1a1a;">Basic</div>
<div class="t" style="left:379.8px;top:100.50px;font-size:6.360px;transform:scaleX(0.7783);color:#1a1a1a;-webkit-text-stroke:0.1px #1a1a1a;">NTFS</div>
<div class="t" style="left:420.5px;top:100.50px;font-size:6.360px;transform:scaleX(0.8333);color:#1a1a1a;-webkit-text-stroke:0.1px #1a1a1a;">Healthy (B...</div>
<div class="t" style="left:457.2px;top:100.50px;font-size:6.360px;transform:scaleX(0.7858);color:#1a1a1a;-webkit-text-stroke:0.1px #1a1a1a;">149,33 GB</div>
<div class="t" style="left:502.1px;top:100.50px;font-size:6.360px;transform:scaleX(0.7858);color:#1a1a1a;-webkit-text-stroke:0.1px #1a1a1a;">130,01 GB</div>
<div class="t" style="left:532.8px;top:100.50px;font-size:6.360px;transform:scaleX(0.7858);color:#1a1a1a;-webkit-text-stroke:0.1px #1a1a1a;">87 %</div>
<svg class="a" style="left:249.6px;top:111.35000000000001px;" width="7" height="3" viewBox="0 0 7 3"><rect x="0" y="0.4" width="6.5" height="2.2" fill="#555"/><rect x="4.8" y="0.9" width="1.3" height="1.1" fill="#5c5"/></svg>
<div class="t" style="left:258px;top:108.45px;font-size:6.660px;transform:scaleX(0.8333);color:#1a1a1a;-webkit-text-stroke:0.1px #1a1a1a;">(Disk 0 partition 1)</div>
<div class="t" style="left:311.8px;top:108.45px;font-size:6.660px;transform:scaleX(0.8333);color:#1a1a1a;-webkit-text-stroke:0.1px #1a1a1a;">Simple</div>
<div class="t" style="left:347.9px;top:108.45px;font-size:6.312px;transform:scaleX(0.8333);color:#1a1a1a;-webkit-text-stroke:0.1px #1a1a1a;">Basic</div>
<div class="t" style="left:420.5px;top:108.45px;font-size:6.360px;transform:scaleX(0.8333);color:#1a1a1a;-webkit-text-stroke:0.1px #1a1a1a;">Healthy (E...</div>
<div class="t" style="left:457.2px;top:108.45px;font-size:6.360px;transform:scaleX(0.7858);color:#1a1a1a;-webkit-text-stroke:0.1px #1a1a1a;">100 MB</div>
<div class="t" style="left:502.1px;top:108.45px;font-size:6.360px;transform:scaleX(0.7858);color:#1a1a1a;-webkit-text-stroke:0.1px #1a1a1a;">100 MB</div>
<div class="t" style="left:532.8px;top:108.45px;font-size:6.360px;transform:scaleX(0.7858);color:#1a1a1a;-webkit-text-stroke:0.1px #1a1a1a;">100 %</div>
<svg class="a" style="left:249.6px;top:119.30000000000001px;" width="7" height="3" viewBox="0 0 7 3"><rect x="0" y="0.4" width="6.5" height="2.2" fill="#555"/><rect x="4.8" y="0.9" width="1.3" height="1.1" fill="#5c5"/></svg>
<div class="t" style="left:258px;top:116.40px;font-size:6.660px;transform:scaleX(0.8333);color:#1a1a1a;-webkit-text-stroke:0.1px #1a1a1a;">(Disk 0 partition 4)</div>
<div class="t" style="left:311.8px;top:116.40px;font-size:6.660px;transform:scaleX(0.8333);color:#1a1a1a;-webkit-text-stroke:0.1px #1a1a1a;">Simple</div>
<div class="t" style="left:347.9px;top:116.40px;font-size:6.312px;transform:scaleX(0.8333);color:#1a1a1a;-webkit-text-stroke:0.1px #1a1a1a;">Basic</div>
<div class="t" style="left:420.5px;top:116.40px;font-size:6.360px;transform:scaleX(0.8333);color:#1a1a1a;-webkit-text-stroke:0.1px #1a1a1a;">Healthy (R...</div>
<div class="t" style="left:457.2px;top:116.40px;font-size:6.360px;transform:scaleX(0.7858);color:#1a1a1a;-webkit-text-stroke:0.1px #1a1a1a;">570 MB</div>
<div class="t" style="left:502.1px;top:116.40px;font-size:6.360px;transform:scaleX(0.7858);color:#1a1a1a;-webkit-text-stroke:0.1px #1a1a1a;">570 MB</div>
<div class="t" style="left:532.8px;top:116.40px;font-size:6.360px;transform:scaleX(0.7858);color:#1a1a1a;-webkit-text-stroke:0.1px #1a1a1a;">100 %</div>
<svg class="a" style="left:249.6px;top:127.25px;" width="7" height="3" viewBox="0 0 7 3"><rect x="0" y="0.4" width="6.5" height="2.2" fill="#555"/><rect x="4.8" y="0.9" width="1.3" height="1.1" fill="#5c5"/></svg>
<div class="t" style="left:258px;top:124.35px;font-size:6.660px;transform:scaleX(0.8333);color:#1a1a1a;-webkit-text-stroke:0.1px #1a1a1a;">DATA Local (D:)</div>
<div class="t" style="left:311.8px;top:124.35px;font-size:6.660px;transform:scaleX(0.8333);color:#1a1a1a;-webkit-text-stroke:0.1px #1a1a1a;">Simple</div>
<div class="t" style="left:347.9px;top:124.35px;font-size:6.312px;transform:scaleX(0.8333);color:#1a1a1a;-webkit-text-stroke:0.1px #1a1a1a;">Basic</div>
<div class="t" style="left:379.8px;top:124.35px;font-size:6.360px;transform:scaleX(0.7783);color:#1a1a1a;-webkit-text-stroke:0.1px #1a1a1a;">NTFS</div>
<div class="t" style="left:420.5px;top:124.35px;font-size:6.360px;transform:scaleX(0.8333);color:#1a1a1a;-webkit-text-stroke:0.1px #1a1a1a;">Healthy (B...</div>
<div class="t" style="left:457.2px;top:124.35px;font-size:6.360px;transform:scaleX(0.7858);color:#1a1a1a;-webkit-text-stroke:0.1px #1a1a1a;">850,00 GB</div>
<div class="t" style="left:502.1px;top:124.35px;font-size:6.360px;transform:scaleX(0.7858);color:#1a1a1a;-webkit-text-stroke:0.1px #1a1a1a;">849,87 GB</div>
<div class="t" style="left:532.8px;top:124.35px;font-size:6.360px;transform:scaleX(0.7858);color:#1a1a1a;-webkit-text-stroke:0.1px #1a1a1a;">100 %</div>
<svg class="a" style="left:249.6px;top:135.20000000000002px;" width="7" height="3" viewBox="0 0 7 3"><rect x="0" y="0.4" width="6.5" height="2.2" fill="#555"/><rect x="4.8" y="0.9" width="1.3" height="1.1" fill="#5c5"/></svg>
<div class="t" style="left:258px;top:132.30px;font-size:6.660px;transform:scaleX(0.8333);color:#1a1a1a;-webkit-text-stroke:0.1px #1a1a1a;">iSCSI Share (H:)</div>
<div class="t" style="left:311.8px;top:132.30px;font-size:6.660px;transform:scaleX(0.8333);color:#1a1a1a;-webkit-text-stroke:0.1px #1a1a1a;">Simple</div>
<div class="t" style="left:347.9px;top:132.30px;font-size:6.312px;transform:scaleX(0.8333);color:#1a1a1a;-webkit-text-stroke:0.1px #1a1a1a;">Basic</div>
<div class="t" style="left:379.8px;top:132.30px;font-size:6.360px;transform:scaleX(0.7783);color:#1a1a1a;-webkit-text-stroke:0.1px #1a1a1a;">NTFS</div>
<div class="t" style="left:420.5px;top:132.30px;font-size:6.360px;transform:scaleX(0.8333);color:#1a1a1a;-webkit-text-stroke:0.1px #1a1a1a;">Healthy (B...</div>
<div class="t" style="left:457.2px;top:132.30px;font-size:6.360px;transform:scaleX(0.7858);color:#1a1a1a;-webkit-text-stroke:0.1px #1a1a1a;">799,98 GB</div>
<div class="t" style="left:502.1px;top:132.30px;font-size:6.360px;transform:scaleX(0.7858);color:#1a1a1a;-webkit-text-stroke:0.1px #1a1a1a;">799,86 GB</div>
<div class="t" style="left:532.8px;top:132.30px;font-size:6.360px;transform:scaleX(0.7858);color:#1a1a1a;-webkit-text-stroke:0.1px #1a1a1a;">100 %</div>
<div class="a" style="left:247.8px;top:206.3px;width:494.40px;height:2.30px;background:#f3f3f3"></div>
<div class="a" style="left:247.8px;top:208.6px;width:494.40px;height:1.00px;background:#a8a8a8"></div>
<div class="a" style="left:247.8px;top:209.6px;width:494.40px;height:141.40px;background:#f0f0f0"></div>
<div class="a" style="left:296.0px;top:211px;width:0.70px;height:140.00px;background:#d8d8d8"></div>
<div class="a" style="left:247.8px;top:258.2px;width:485.70px;height:0.80px;background:#d8d8d8"></div>
<div class="a" style="left:247.8px;top:305.0px;width:485.70px;height:0.80px;background:#d8d8d8"></div>
<svg class="a" style="left:253.8px;top:218px;" width="6" height="2" viewBox="0 0 6 2"><rect x="0" y="0.2" width="5.5" height="1.4" fill="#484848"/><rect x="4" y="0.4" width="1.2" height="1" fill="#5c5"/></svg>
<div class="t" style="left:261px;top:215.20px;font-size:6.600px;transform:scaleX(0.8333);color:#111;font-weight:bold;-webkit-text-stroke:0.1px #111;">Disk 0</div>
<div class="t" style="left:252.9px;top:222.50px;font-size:6.120px;transform:scaleX(0.8333);color:#222;-webkit-text-stroke:0.1px #222;">Basic</div>
<div class="t" style="left:252.9px;top:229.50px;font-size:6.360px;transform:scaleX(0.7858);color:#222;-webkit-text-stroke:0.1px #222;">999,98 GB</div>
<div class="t" style="left:252.9px;top:236.40px;font-size:6.120px;transform:scaleX(0.8333);color:#222;-webkit-text-stroke:0.1px #222;">Online</div>
<div class="a" style="left:298px;top:215.1px;width:434.30px;height:41.50px;background:#f7f7f7"></div>
<div class="a" style="left:298px;top:215.1px;width:52.90px;height:6.10px;background:#000080"></div>
<div class="a" style="left:298px;top:221.2px;width:52.90px;height:35.40px;background:#fff;border-left:1.1px solid #dcdcdc;border-right:1.3px solid #d2d2d2;border-bottom:1.1px solid #cccccc"></div>
<div class="a" style="left:352.7px;top:215.1px;width:140.50px;height:6.10px;background:#000080"></div>
<div class="a" style="left:352.7px;top:221.2px;width:140.50px;height:35.40px;background:#fff;border-left:1.1px solid #dcdcdc;border-right:1.3px solid #d2d2d2;border-bottom:1.1px solid #cccccc"></div>
<div class="a" style="left:494.4px;top:215.1px;width:74.00px;height:6.10px;background:#000080"></div>
<div class="a" style="left:494.4px;top:221.2px;width:74.00px;height:35.40px;background:#fff;border-left:1.1px solid #dcdcdc;border-right:1.3px solid #d2d2d2;border-bottom:1.1px solid #cccccc"></div>
<div class="a" style="left:569.8px;top:215.1px;width:162.50px;height:6.10px;background:#000080"></div>
<div class="a" style="left:569.8px;top:221.2px;width:162.50px;height:35.40px;background:#fff;border-left:1.1px solid #dcdcdc;border-right:1.3px solid #d2d2d2;border-bottom:1.1px solid #cccccc"></div>
<div class="t" style="left:301.4px;top:230.30px;font-size:6.360px;transform:scaleX(0.8333);color:#222;-webkit-text-stroke:0.1px #222;">100 MB</div>
<div class="t" style="left:301.4px;top:237.50px;font-size:6.360px;transform:scaleX(0.8333);color:#222;-webkit-text-stroke:0.1px #222;width:56px;overflow:hidden">Healthy (EFI Systen</div>
<div class="t" style="left:358.8px;top:222.90px;font-size:6.000px;transform:scaleX(0.8333);color:#111;font-weight:bold;-webkit-text-stroke:0.1px #111;">(C:)</div>
<div class="t" style="left:355.9px;top:230.10px;font-size:6.360px;transform:scaleX(0.7858);color:#222;-webkit-text-stroke:0.1px #222;">149,33 GB NTFS</div>
<div class="t" style="left:355.9px;top:237.00px;font-size:6.516px;transform:scaleX(0.8333);color:#222;-webkit-text-stroke:0.1px #222;">Healthy (Boot, Page File, Crash Dump, Basic Data Parti</div>
<div class="t" style="left:497.6px;top:230.30px;font-size:6.360px;transform:scaleX(0.8333);color:#222;-webkit-text-stroke:0.1px #222;">570 MB</div>
<div class="t" style="left:497.6px;top:237.00px;font-size:6.672px;transform:scaleX(0.8333);color:#222;-webkit-text-stroke:0.1px #222;">Healthy (Recovery Partition</div>
<div class="t" style="left:572.8px;top:222.90px;font-size:6.588px;transform:scaleX(0.8333);color:#111;font-weight:bold;-webkit-text-stroke:0.1px #111;">DATA Local&nbsp; (D:)</div>
<div class="t" style="left:572.8px;top:230.10px;font-size:6.360px;transform:scaleX(0.8000);color:#222;-webkit-text-stroke:0.1px #222;">850,00 GB NTFS</div>
<div class="t" style="left:572.8px;top:237.00px;font-size:6.648px;transform:scaleX(0.8333);color:#222;-webkit-text-stroke:0.1px #222;">Healthy (Basic Data Partition)</div>
<svg class="a" style="left:253px;top:258.5px" width="26" height="11" viewBox="0 0 26 11"><path d="M0.6 0 L24.1 0 L24.1 10.6 L0.6 10.6 Z" fill="#ffec00"/></svg>
<svg class="a" style="left:253.8px;top:264.5px;" width="6" height="2" viewBox="0 0 6 2"><rect x="0" y="0.2" width="5.5" height="1.4" fill="#484848"/><rect x="4" y="0.4" width="1.2" height="1" fill="#5c5"/></svg>
<div class="t" style="left:261px;top:261.50px;font-size:6.600px;transform:scaleX(0.8333);color:#111;font-weight:bold;-webkit-text-stroke:0.1px #111;">Disk 1</div>
<div class="t" style="left:252.9px;top:269.00px;font-size:6.120px;transform:scaleX(0.8333);color:#222;-webkit-text-stroke:0.1px #222;">Basic</div>
<div class="t" style="left:252.9px;top:276.20px;font-size:6.360px;transform:scaleX(0.7858);color:#222;-webkit-text-stroke:0.1px #222;">799,98 GB</div>
<div class="t" style="left:252.9px;top:283.10px;font-size:6.120px;transform:scaleX(0.8333);color:#222;-webkit-text-stroke:0.1px #222;">Online</div>
<div class="a" style="left:297.2px;top:259.8px;width:431.10px;height:44.20px;border-right:1.1px solid #d6d6d6;border-bottom:1.1px solid #d6d6d6"></div>
<div class="a" style="left:298px;top:262.0px;width:427.40px;height:6.10px;background:#000080"></div>
<div class="a" style="left:298px;top:268.1px;width:427.40px;height:34.50px;background:#fff;border-left:1.1px solid #dcdcdc;border-right:1.3px solid #d2d2d2;border-bottom:1.1px solid #cccccc"></div>
<svg class="a" style="left:296.5px;top:264.5px" width="48" height="14" viewBox="0 0 48 14"><path d="M0.3 3.3 L45.3 3.7 L45.3 11.8 L0.3 12.8 Z" fill="#ffec00"/><path d="M20.5 3.1 Q33 1.8 45.4 1.3 L45.4 3.8 Q33 3.4 20.5 3.1 Z" fill="#080808"/></svg>
<div class="t" style="left:301.3px;top:269.70px;font-size:6.120px;transform:scaleX(0.8333);color:#111;font-weight:bold;-webkit-text-stroke:0.1px #111;">iSCSI Share&nbsp; (H:)</div>
<div class="t" style="left:301.3px;top:276.80px;font-size:6.360px;transform:scaleX(0.7942);color:#222;-webkit-text-stroke:0.1px #222;">799,98 GB NTFS</div>
<div class="t" style="left:301.3px;top:284.00px;font-size:6.648px;transform:scaleX(0.8333);color:#222;-webkit-text-stroke:0.1px #222;">Healthy (Basic Data Partition)</div>
<svg class="a" style="left:253px;top:308.6px;" width="7" height="6" viewBox="0 0 7 6"><ellipse cx="3.8" cy="2.4" rx="2.4" ry="2.2" fill="#e4e4e4" stroke="#8a8a8a" stroke-width="0.5"/><rect x="0.3" y="4.1" width="6.4" height="1.7" fill="#505050"/><rect x="4.9" y="4.5" width="1.2" height="0.9" fill="#4b4"/></svg>
<div class="t" style="left:260.4px;top:307.80px;font-size:6.720px;transform:scaleX(0.8333);color:#111;font-weight:bold;-webkit-text-stroke:0.1px #111;">CD-ROM 0</div>
<div class="t" style="left:252.7px;top:315.40px;font-size:6.480px;transform:scaleX(0.8333);color:#222;-webkit-text-stroke:0.1px #222;">DVD (E:)</div>
<div class="t" style="left:252.7px;top:329.60px;font-size:6.480px;transform:scaleX(0.8333);color:#222;-webkit-text-stroke:0.1px #222;">No Media</div>
<div class="a" style="left:733.6px;top:209.6px;width:8.20px;height:141.40px;background:#f0f0f0"></div>
<div class="a" style="left:734.2px;top:218px;width:6.40px;height:94.00px;background:#cdcdcd"></div>
<svg class="a" style="left:735.2px;top:212.6px;" width="5" height="3" viewBox="0 0 5 3"><path d="M0.7 2.4l1.7-1.6 1.7 1.6" fill="none" stroke="#505050" stroke-width="0.85"/></svg>
<svg class="a" style="left:735.2px;top:345.6px;" width="5" height="3" viewBox="0 0 5 3"><path d="M0.7 0.6l1.7 1.6 1.7-1.6" fill="none" stroke="#505050" stroke-width="0.85"/></svg>
<div class="a" style="left:247.2px;top:91.2px;width:1.30px;height:269.40px;background:#a6a6a6"></div>
<div class="a" style="left:248.0px;top:350.8px;width:493.60px;height:9.80px;background:#f2f2f2;border-top:0.6px solid #e6e6e6;border-right:0.8px solid #cfcfcf;border-bottom:0.8px solid #c4c4c4"></div>
<div class="a" style="left:250.9px;top:353.2px;width:5.20px;height:5.20px;background:#000"></div>
<div class="t" style="left:258.2px;top:351.20px;font-size:6.720px;transform:scaleX(0.8333);color:#222;-webkit-text-stroke:0.1px #222;">Unallocated</div>
<div class="a" style="left:290.7px;top:353.2px;width:5.20px;height:5.20px;background:#000080"></div>
<div class="t" style="left:298px;top:351.20px;font-size:6.924px;transform:scaleX(0.8333);color:#222;-webkit-text-stroke:0.1px #222;">Primary partition</div>
<div class="a" style="left:248.0px;top:360.6px;width:494.00px;height:11.30px;background:#f0f0f0;border-top:0.6px solid #fafafa"></div>
<div class="a" style="left:638.0px;top:360.5px;width:0.60px;height:11.00px;background:#dedede"></div>
<div class="a" style="left:701.3px;top:360.5px;width:0.60px;height:11.00px;background:#dedede"></div>
</div></body></html>
